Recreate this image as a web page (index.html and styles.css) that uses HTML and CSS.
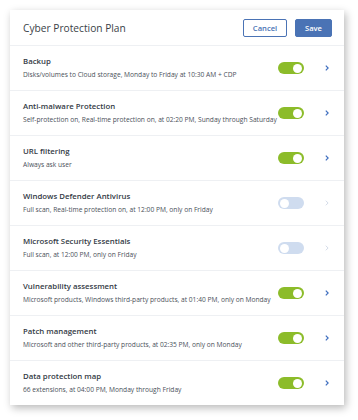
FILE: index.html
```html
<!DOCTYPE html>
<html>
<head>
<meta charset="utf-8">
<link rel="stylesheet" href="styles.css">
</head>
<body>
<div class="card">
  <div class="header">
    <div class="title">Cyber Protection Plan</div>
    <div class="actions">
      <button class="btn btn-outline">Cancel</button>
      <button class="btn btn-primary">Save</button>
    </div>
  </div>
  <div class="row">
    <div class="text"><div class="name">Backup</div><div class="desc">Disks/volumes to Cloud storage, Monday to Friday at 10:30 AM + CDP</div></div>
    <span class="toggle on"></span>
    <svg class="chev" viewBox="0 0 4 6" width="4" height="6"><path d="M0.8 0.7 L3.1 3 L0.8 5.3" fill="none" stroke="#3f6fbf" stroke-width="1.2"/></svg>
  </div>
  <div class="row">
    <div class="text"><div class="name">Anti-malware Protection</div><div class="desc">Self-protection on, Real-time protection on, at 02:20 PM, Sunday through Saturday</div></div>
    <span class="toggle on"></span>
    <svg class="chev" viewBox="0 0 4 6" width="4" height="6"><path d="M0.8 0.7 L3.1 3 L0.8 5.3" fill="none" stroke="#3f6fbf" stroke-width="1.2"/></svg>
  </div>
  <div class="row">
    <div class="text"><div class="name">URL filtering</div><div class="desc">Always ask user</div></div>
    <span class="toggle on"></span>
    <svg class="chev" viewBox="0 0 4 6" width="4" height="6"><path d="M0.8 0.7 L3.1 3 L0.8 5.3" fill="none" stroke="#3f6fbf" stroke-width="1.2"/></svg>
  </div>
  <div class="row">
    <div class="text"><div class="name">Windows Defender Antivirus</div><div class="desc">Full scan, Real-time protection on, at 12:00 PM, only on Friday</div></div>
    <span class="toggle off"></span>
    <svg class="chev" viewBox="0 0 4 6" width="4" height="6"><path d="M0.8 0.7 L3.1 3 L0.8 5.3" fill="none" stroke="#d3dbe8" stroke-width="1"/></svg>
  </div>
  <div class="row">
    <div class="text"><div class="name">Microsoft Security Essentials</div><div class="desc">Full scan, at 12:00 PM, only on Friday</div></div>
    <span class="toggle off"></span>
    <svg class="chev" viewBox="0 0 4 6" width="4" height="6"><path d="M0.8 0.7 L3.1 3 L0.8 5.3" fill="none" stroke="#d3dbe8" stroke-width="1"/></svg>
  </div>
  <div class="row">
    <div class="text"><div class="name">Vulnerability assessment</div><div class="desc">Microsoft products, Windows third-party products, at 01:40 PM, only on Monday</div></div>
    <span class="toggle on"></span>
    <svg class="chev" viewBox="0 0 4 6" width="4" height="6"><path d="M0.8 0.7 L3.1 3 L0.8 5.3" fill="none" stroke="#3f6fbf" stroke-width="1.2"/></svg>
  </div>
  <div class="row">
    <div class="text"><div class="name">Patch management</div><div class="desc">Microsoft and other third-party products, at 02:35 PM, only on Monday</div></div>
    <span class="toggle on"></span>
    <svg class="chev" viewBox="0 0 4 6" width="4" height="6"><path d="M0.8 0.7 L3.1 3 L0.8 5.3" fill="none" stroke="#3f6fbf" stroke-width="1.2"/></svg>
  </div>
  <div class="row last">
    <div class="text"><div class="name">Data protection map</div><div class="desc">66 extensions, at 04:00 PM, Monday through Friday</div></div>
    <span class="toggle on"></span>
    <svg class="chev" viewBox="0 0 4 6" width="4" height="6"><path d="M0.8 0.7 L3.1 3 L0.8 5.3" fill="none" stroke="#3f6fbf" stroke-width="1.2"/></svg>
  </div>
</div>
</body>
</html>
```
FILE: styles.css
```css
html, body { margin: 0; padding: 0; background: #ffffff; }
body { padding: 10px 14px 14px 10px; font-family: "Open Sans", "Liberation Sans", sans-serif; color: #333c4a; }
.card {
  width: 334px;
  background: #fff;
  box-shadow: 2px 3px 8px rgba(0,0,0,0.28);
}
.header {
  height: 35px;
  display: flex;
  align-items: center;
  justify-content: space-between;
  padding: 0 12px 0 13px;
  border-bottom: 1px solid #eef0f3;
}
.title { font-size: 10.2px; color: #3a3f47; }
.actions { display: flex; gap: 8px; }
.btn {
  height: 18px;
  border-radius: 2px;
  font-family: inherit;
  font-size: 7.6px;
  font-weight: 600;
  padding: 0;
  cursor: pointer;
}
.btn-outline { width: 44px; background: #fff; color: #4a73b5; border: 1px solid #4a73b5; }
.btn-primary { width: 37px; background: #4a73b5; color: #fff; border: 1px solid #4a73b5; }
.row {
  height: 44px;
  display: flex;
  align-items: center;
  padding: 0 15px 0 13px;
  border-bottom: 1px solid #eef0f3;
}
.row.last { border-bottom: none; }
.text { flex: 1; min-width: 0; }
.name { font-size: 7.8px; font-weight: 600; color: #333a45; line-height: 11px; }
.desc { font-size: 6.65px; color: #4a505a; line-height: 10px; margin-top: 3px; white-space: nowrap; }
.toggle {
  width: 26px; height: 12px;
  border-radius: 6px;
  position: relative;
  flex: none;
  margin-right: 21px;
}
.toggle::after {
  content: "";
  position: absolute;
  top: 1.5px;
  width: 9px; height: 9px;
  border-radius: 50%;
  background: #fff;
}
.toggle.on { background: #8cbc2a; }
.toggle.on::after { right: 2px; }
.toggle.off { background: #cfdcef; }
.toggle.off::after { left: 2px; }
.chev { flex: none; }
```
